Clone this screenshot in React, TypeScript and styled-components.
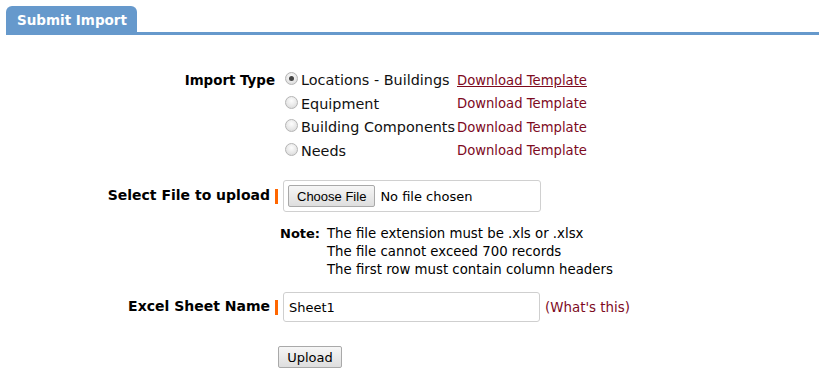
import styled, { createGlobalStyle } from "styled-components"

const GlobalStyle = createGlobalStyle`
  body {
    margin: 0;
    background: #fff;
    font-family: "DejaVu Sans", Verdana, sans-serif;
    font-size: 13px;
    color: #000;
  }
`

const Page = styled.div`
  padding: 6px 0 0 6px;
`

const TabBar = styled.div`
  display: flex;
  border-bottom: 3px solid #6699cc;
`

const Tab = styled.div`
  background: #6699cc;
  color: #fff;
  font-weight: bold;
  font-size: 13.5px;
  height: 26px;
  line-height: 28px;
  padding: 0 10px 0 11px;
  border-radius: 6px 6px 0 0;
`

const Form = styled.div`
  display: flex;
  flex-direction: column;
  margin-left: -6px;
`

const FieldRow = styled.div<{ $top: number }>`
  display: grid;
  grid-template-columns: 278px 1fr;
  align-items: center;
  margin-top: ${p => p.$top}px;
`

const Label = styled.div<{ $alignTop?: boolean }>`
  display: flex;
  align-items: center;
  justify-content: flex-end;
  font-weight: bold;
  font-size: ${p => (p.$alignTop ? 13.4 : 14)}px;
  padding-right: 3px;
  align-self: ${p => (p.$alignTop ? "start" : "center")};
  line-height: 23.5px;
`

const Required = styled.span`
  display: inline-block;
  width: 3px;
  height: 15px;
  background: #ff6600;
  margin: 0 -3px 0 5px;
`

const RadioList = styled.div`
  display: flex;
  flex-direction: column;
`

const RadioRow = styled.label`
  display: grid;
  grid-template-columns: 16px 156px auto;
  align-items: center;
  height: 23.5px;
  padding-left: 7px;
  color: #111;
  cursor: pointer;
`

const Radio = styled.input.attrs({ type: "radio", name: "importType" })`
  appearance: none;
  margin: 0 0 3px 0;
  width: 13px;
  height: 13px;
  border-radius: 50%;
  border: 1px solid #b5b5b5;
  background: radial-gradient(circle at 50% 35%, #fdfdfd 0%, #e6e6e6 60%, #d2d2d2 100%);
  position: relative;
  &:checked::after {
    content: "";
    position: absolute;
    left: 3px;
    top: 3px;
    width: 5px;
    height: 5px;
    border-radius: 50%;
    background: #444;
  }
`

const RadioText = styled.span`
  font-size: 14.4px;
  white-space: nowrap;
`

const TemplateLink = styled.a<{ $underline?: boolean }>`
  color: #7d0a1e;
  font-size: 13.2px;
  text-decoration: ${p => (p.$underline ? "underline" : "none")};
  cursor: pointer;
`

const FileBox = styled.div`
  display: flex;
  align-items: center;
  gap: 5px;
  width: 258px;
  height: 32px;
  box-sizing: border-box;
  margin-left: 5px;
  padding: 0 4px;
  border: 1px solid #d0d0d0;
  border-radius: 3px;
`

const FileButton = styled.button`
  font-family: "Liberation Sans", Arial, sans-serif;
  font-size: 13px;
  color: #000;
  height: 22px;
  padding: 0 8px;
  border: 1px solid #a9a9a9;
  border-radius: 2px;
  background: linear-gradient(#f6f6f6, #dedede);
`

const NoteGrid = styled.div`
  display: grid;
  grid-template-columns: 47px auto;
  line-height: 18px;
  margin-left: 2px;
  font-size: 13.3px;
`

const NoteTitle = styled.span`
  font-weight: bold;
  font-size: 13px;
`

const NoteLines = styled.div`
  display: flex;
  flex-direction: column;
`

const InputWrap = styled.div`
  display: flex;
  align-items: center;
  gap: 5px;
  margin-left: 5px;
`

const TextInput = styled.input`
  width: 257px;
  height: 30px;
  box-sizing: border-box;
  border: 1px solid #cfcfcf;
  border-radius: 3px;
  padding: 0 5px;
  font-family: "DejaVu Sans", Verdana, sans-serif;
  font-size: 13px;
  color: #000;
  outline: none;
`

const HelpLink = styled.a`
  color: #7d0a1e;
  font-size: 13.4px;
  cursor: pointer;
`

const SubmitButton = styled.button`
  justify-self: start;
  font-family: "DejaVu Sans", Verdana, sans-serif;
  font-size: 13px;
  color: #000;
  height: 22px;
  width: 64px;
  padding: 0;
  border: 1px solid #a9a9a9;
  border-radius: 2px;
  background: linear-gradient(#f6f6f6, #dedede);
`

const importTypes = ["Locations - Buildings", "Equipment", "Building Components", "Needs"]

export default function App() {
  return (
    <Page>
      <GlobalStyle />
      <TabBar>
        <Tab>Submit Import</Tab>
      </TabBar>
      <Form>
        <FieldRow $top={33.5}>
          <Label $alignTop>Import Type</Label>
          <RadioList>
            {importTypes.map((t, i) => (
              <RadioRow key={t}>
                <Radio defaultChecked={i === 0} />
                <RadioText>{t}</RadioText>
                <TemplateLink $underline={i === 0}>Download Template</TemplateLink>
              </RadioRow>
            ))}
          </RadioList>
        </FieldRow>
        <FieldRow $top={17.5}>
          <Label>
            Select File to upload<Required />
          </Label>
          <FileBox>
            <FileButton type="button">Choose File</FileButton>
            <span>No file chosen</span>
          </FileBox>
        </FieldRow>
        <FieldRow $top={13}>
          <span />
          <NoteGrid>
            <NoteTitle>Note:</NoteTitle>
            <NoteLines>
              <span>The file extension must be .xls or .xlsx</span>
              <span>The file cannot exceed 700 records</span>
              <span>The first row must contain column headers</span>
            </NoteLines>
          </NoteGrid>
        </FieldRow>
        <FieldRow $top={13}>
          <Label>
            Excel Sheet Name<Required />
          </Label>
          <InputWrap>
            <TextInput defaultValue="Sheet1" />
            <HelpLink>(What's this)</HelpLink>
          </InputWrap>
        </FieldRow>
        <FieldRow $top={24}>
          <span />
          <SubmitButton type="button">Upload</SubmitButton>
        </FieldRow>
      </Form>
    </Page>
  )
}
